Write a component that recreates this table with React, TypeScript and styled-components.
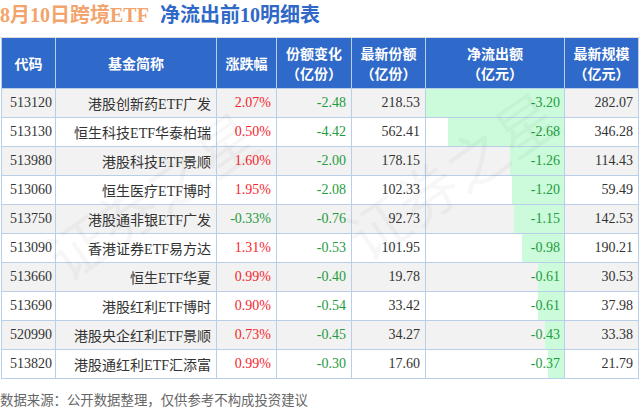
import styled, { createGlobalStyle } from 'styled-components'

const GlobalStyle = createGlobalStyle`
  html, body {
    margin: 0;
    padding: 0;
    background: #fff;
  }
  body {
    font-family: "Liberation Serif", "Noto Sans CJK SC", serif;
  }
`

type Row = {
  code: string
  name: string
  pct: string
  shareChange: string
  shares: string
  outflow: number
  scale: string
}

const rows: Row[] = [
  { code: '513120', name: '港股创新药ETF广发', pct: '2.07%', shareChange: '-2.48', shares: '218.53', outflow: -3.2, scale: '282.07' },
  { code: '513130', name: '恒生科技ETF华泰柏瑞', pct: '0.50%', shareChange: '-4.42', shares: '562.41', outflow: -2.68, scale: '346.28' },
  { code: '513980', name: '港股科技ETF景顺', pct: '1.60%', shareChange: '-2.00', shares: '178.15', outflow: -1.26, scale: '114.43' },
  { code: '513060', name: '恒生医疗ETF博时', pct: '1.95%', shareChange: '-2.08', shares: '102.33', outflow: -1.2, scale: '59.49' },
  { code: '513750', name: '港股通非银ETF广发', pct: '-0.33%', shareChange: '-0.76', shares: '92.73', outflow: -1.15, scale: '142.53' },
  { code: '513090', name: '香港证券ETF易方达', pct: '1.31%', shareChange: '-0.53', shares: '101.95', outflow: -0.98, scale: '190.21' },
  { code: '513660', name: '恒生ETF华夏', pct: '0.99%', shareChange: '-0.40', shares: '19.78', outflow: -0.61, scale: '30.53' },
  { code: '513690', name: '港股红利ETF博时', pct: '0.90%', shareChange: '-0.54', shares: '33.42', outflow: -0.61, scale: '37.98' },
  { code: '520990', name: '港股央企红利ETF景顺', pct: '0.73%', shareChange: '-0.45', shares: '34.27', outflow: -0.43, scale: '33.38' },
  { code: '513820', name: '港股通红利ETF汇添富', pct: '0.99%', shareChange: '-0.30', shares: '17.60', outflow: -0.37, scale: '21.79' },
]

const COLS = '54px 161px 60px 75px 74px 139px 74px'
const maxOutflow = Math.max(...rows.map((r) => Math.abs(r.outflow)))

export default function App() {
  return (
    <Page>
      <GlobalStyle />
      <Title>
        <span className="date">8月10日跨境ETF</span>
        <span className="main">净流出前10明细表</span>
      </Title>
      <Table>
        <HeadRow>
          <HeadCell>代码</HeadCell>
          <HeadCell>基金简称</HeadCell>
          <HeadCell>涨跌幅</HeadCell>
          <HeadCell>份额变化<br />（亿份）</HeadCell>
          <HeadCell>最新份额<br />（亿份）</HeadCell>
          <HeadCell>净流出额<br />（亿元）</HeadCell>
          <HeadCell>最新规模<br />（亿元）</HeadCell>
        </HeadRow>
        {rows.map((r, i) => (
          <BodyRow key={r.code} $striped={i % 2 === 0}>
            <Cell $align="left">{r.code}</Cell>
            <Cell>{r.name}</Cell>
            <Cell $tone={r.pct.startsWith('-') ? 'down' : 'up'}>{r.pct}</Cell>
            <Cell $tone="down">{r.shareChange}</Cell>
            <Cell>{r.shares}</Cell>
            <BarCell $tone="down">
              <Bar style={{ width: `${(Math.abs(r.outflow) / maxOutflow) * 100}%` }} />
              <span>{r.outflow.toFixed(2)}</span>
            </BarCell>
            <Cell>{r.scale}</Cell>
          </BodyRow>
        ))}
      </Table>
      <Footer>数据来源：公开数据整理，仅供参考不构成投资建议</Footer>
      <Watermark $x={30} $y={150}>证券之星</Watermark>
      <Watermark $x={330} $y={130}>证券之星</Watermark>
    </Page>
  )
}

const Page = styled.div`
  position: relative;
  width: 640px;
  height: 410px;
  overflow: hidden;
`

const Title = styled.div`
  height: 30px;
  line-height: 30px;
  font-size: 20px;
  font-weight: bold;
  white-space: nowrap;
  border-bottom: 1px solid #dcdcdc;
  padding-bottom: 7px;

  .date {
    color: #f3a46c;
  }
  .main {
    color: #2f68c6;
    margin-left: 11px;
  }
`

const Table = styled.div`
  margin-left: 1px;
  width: 637px;
  border-left: 1px solid #b9cfe8;
`

const HeadRow = styled.div`
  display: grid;
  grid-template-columns: ${COLS};
  height: 51px;
  background: #2f69c9;
  border-bottom: 1px solid #b9cfe8;
  box-sizing: border-box;
`

const HeadCell = styled.div`
  display: flex;
  align-items: center;
  justify-content: center;
  text-align: center;
  color: #fff;
  font-size: 14px;
  font-weight: bold;
  line-height: 20px;
  border-right: 1px solid #b9cfe8;
  font-family: "Noto Sans CJK SC", sans-serif;
`

const BodyRow = styled.div<{ $striped: boolean }>`
  display: grid;
  grid-template-columns: ${COLS};
  height: 29px;
  box-sizing: border-box;
  border-bottom: 1px solid #b9cfe8;
  background: ${(p) => (p.$striped ? '#f2f2f2' : '#fff')};
`

const Cell = styled.div<{ $align?: 'left' | 'right'; $tone?: 'up' | 'down' }>`
  display: flex;
  align-items: center;
  justify-content: ${(p) => (p.$align === 'left' ? 'flex-start' : 'flex-end')};
  padding: ${(p) => (p.$align === 'left' ? '0 0 0 8px' : '0 5px 0 0')};
  font-size: 14px;
  color: ${(p) => (p.$tone === 'up' ? '#f5262e' : p.$tone === 'down' ? '#1f9c3e' : '#333')};
  border-right: 1px solid #b9cfe8;
  white-space: nowrap;
  min-width: 0;
`

const BarCell = styled(Cell)`
  position: relative;
  padding-right: 4px;

  span {
    position: relative;
  }
`

const Bar = styled.div`
  position: absolute;
  top: 0;
  right: 0;
  bottom: 0;
  background: #cbfbdb;
`

const Footer = styled.div`
  margin-top: 11px;
  font-size: 13.4px;
  color: #666;
  line-height: 18px;
  font-family: "Noto Sans CJK SC", sans-serif;
  white-space: nowrap;
`

const Watermark = styled.div<{ $x: number; $y: number }>`
  position: absolute;
  left: ${(p) => p.$x}px;
  top: ${(p) => p.$y}px;
  font-size: 60px;
  color: rgba(0, 0, 0, 0.03);
  transform: rotate(-35deg);
  white-space: nowrap;
  pointer-events: none;
  font-family: "Noto Sans CJK SC", sans-serif;
`
